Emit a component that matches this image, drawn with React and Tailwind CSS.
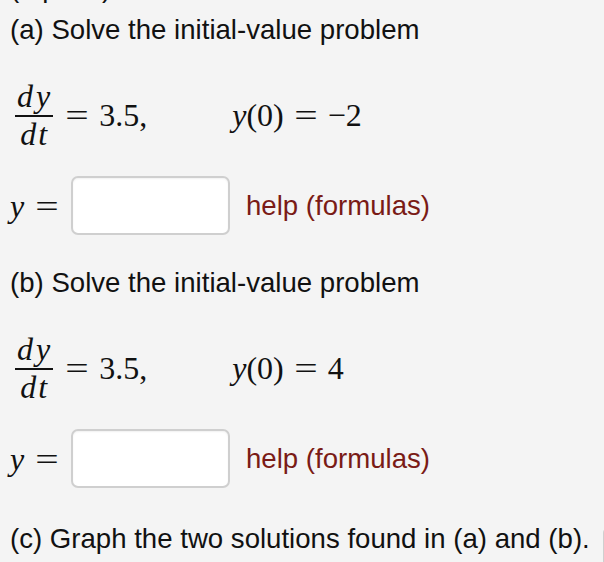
import React from "react";

const sans = { fontFamily: '"Liberation Sans", Arial, sans-serif' };

function Eq() {
  return <span className="inline-block scale-x-[1.3]">=</span>;
}

function Frac() {
  return (
    <span className="inline-flex flex-col items-center italic leading-[28px]">
      <span className="tracking-[3px] pl-[3px]">dy</span>
      <span className="block h-[2px] w-[38px] bg-[#111] mt-[5px] mb-[3px]" />
      <span className="tracking-[2px] pl-[2px]">dt</span>
    </span>
  );
}

function Equation({ init }) {
  return (
    <div className="flex items-center h-[70px] pl-[4px] font-['Liberation_Serif',serif] text-[32px] text-[#111]">
      <Frac />
      <span className="ml-[15px]">
        <Eq />
      </span>
      <span className="ml-[13px]">3.5,</span>
      <span className="ml-[85px]">
        <span className="italic">y</span>(0)
        <span className="ml-[13px]">
          <Eq />
        </span>
        <span className="ml-[13px]">{init}</span>
      </span>
    </div>
  );
}

function Answer() {
  return (
    <div className="flex items-center h-[59px]">
      <span className="w-[61px] font-['Liberation_Serif',serif] text-[32px] text-[#111]">
        <span className="italic">y</span>
        <span className="ml-[14px]">
          <Eq />
        </span>
      </span>
      <input
        type="text"
        className="w-[159px] h-[59px] rounded-[7px] border-2 border-[#cfcfcf] bg-white outline-none shadow-[inset_0_1px_2px_rgba(0,0,0,0.06)]"
      />
      <a
        href="#"
        className="ml-[16px] text-[27.6px] text-[#7a1b16] no-underline"
        style={sans}
      >
        help (formulas)
      </a>
    </div>
  );
}

export default function App() {
  return (
    <div
      className="w-[604px] h-[562px] overflow-hidden bg-[#f4f4f4] text-[#111] pl-[10px] text-[27.6px] leading-[32px]"
      style={sans}
    >
      <div className="mt-[-28px] h-[32px]">(1 point)</div>
      <p className="mt-[10px]">(a) Solve the initial-value problem</p>
      <div className="mt-[34px]">
        <Equation init="−2" />
      </div>
      <div className="mt-[26px]">
        <Answer />
      </div>
      <p className="mt-[32px]">(b) Solve the initial-value problem</p>
      <div className="mt-[34px]">
        <Equation init="4" />
      </div>
      <div className="mt-[26px]">
        <Answer />
      </div>
      <div className="mt-[35px] flex items-start whitespace-nowrap">
        <span>(c) Graph the two solutions found in (a) and (b).</span>
        <span className="ml-[13px] mt-[4px] inline-block w-[30px] h-[40px] rounded-[6px] border-2 border-[#cfcfcf] bg-white shrink-0" />
      </div>
    </div>
  );
}
